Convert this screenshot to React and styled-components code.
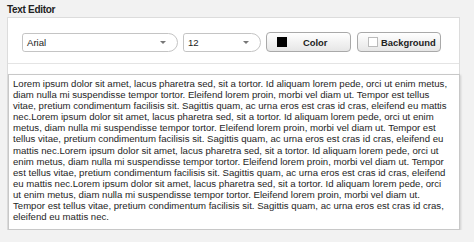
import { useState } from "react";
import styled, { createGlobalStyle } from "styled-components";

const GlobalStyle = createGlobalStyle`
  body {
    margin: 0;
    background: #f2f2f2;
    font-family: "Liberation Sans", Arial, sans-serif;
  }
`;

// wrapped the way the original editor wraps it
const LINES = [
  "Lorem ipsum dolor sit amet, lacus pharetra sed, sit a tortor. Id aliquam lorem pede, orci ut enim metus,",
  "diam nulla mi suspendisse tempor tortor. Eleifend lorem proin, morbi vel diam ut. Tempor est tellus",
  "vitae, pretium condimentum facilisis sit. Sagittis quam, ac urna eros est cras id cras, eleifend eu mattis",
  "nec.Lorem ipsum dolor sit amet, lacus pharetra sed, sit a tortor. Id aliquam lorem pede, orci ut enim",
  "metus, diam nulla mi suspendisse tempor tortor. Eleifend lorem proin, morbi vel diam ut. Tempor est",
  "tellus vitae, pretium condimentum facilisis sit. Sagittis quam, ac urna eros est cras id cras, eleifend eu",
  "mattis nec.Lorem ipsum dolor sit amet, lacus pharetra sed, sit a tortor. Id aliquam lorem pede, orci ut",
  "enim metus, diam nulla mi suspendisse tempor tortor. Eleifend lorem proin, morbi vel diam ut. Tempor",
  "est tellus vitae, pretium condimentum facilisis sit. Sagittis quam, ac urna eros est cras id cras, eleifend",
  "eu mattis nec.Lorem ipsum dolor sit amet, lacus pharetra sed, sit a tortor. Id aliquam lorem pede, orci",
  "ut enim metus, diam nulla mi suspendisse tempor tortor. Eleifend lorem proin, morbi vel diam ut.",
  "Tempor est tellus vitae, pretium condimentum facilisis sit. Sagittis quam, ac urna eros est cras id cras,",
  "eleifend eu mattis nec.",
];

const Page = styled.div`
  padding: 4px 14px 0 7px;
`;

const Title = styled.h1`
  margin: 0;
  height: 13px;
  font-size: 10px;
  line-height: 11px;
  font-weight: bold;
  letter-spacing: -0.3px;
  color: #222;
`;

const Panel = styled.section`
  background: #fff;
  border: 1px solid #dcdcdc;
  border-bottom: none;
`;

const Toolbar = styled.div`
  display: flex;
  align-items: center;
  gap: 5px;
  padding: 14px 14px 11px;
  border-bottom: 1px solid #e4e4e4;
`;

const Select = styled.div`
  box-sizing: border-box;
  width: ${(p) => p.$width}px;
  height: 19px;
  display: flex;
  align-items: center;
  justify-content: space-between;
  padding: 0 11px 0 4px;
  border: 1px solid #c4c4c4;
  border-radius: 3px 10px 10px 3px;
  font-size: 9.6px;
  color: #222;
  background: #fff;
`;

const Arrow = styled.span`
  width: 0;
  height: 0;
  border-left: 3px solid transparent;
  border-right: 3px solid transparent;
  border-top: 3px solid #777;
`;

const Button = styled.button`
  box-sizing: border-box;
  width: ${(p) => p.$width}px;
  height: 20px;
  margin-left: ${(p) => p.$gap || 0}px;
  display: flex;
  align-items: center;
  gap: ${(p) => p.$inner}px;
  padding: 0 0 0 10px;
  border: 1px solid #a9a9a9;
  border-radius: 4px;
  background: linear-gradient(#ffffff, #e6e6e6);
  font-family: "Liberation Sans", Arial, sans-serif;
  font-size: 9.4px;
  font-weight: bold;
  color: #222;
  cursor: pointer;
`;

const Swatch = styled.span`
  box-sizing: border-box;
  width: 10px;
  height: 10px;
  flex: none;
  background: ${(p) => p.$color};
  border: 1px solid ${(p) => (p.$color === "#000" ? "#000" : "#bbb")};
`;

const Editor = styled.textarea`
  display: block;
  box-sizing: border-box;
  width: calc(100% + 1px);
  height: 156px;
  margin: 10px 0 0 0;
  padding: 3px 8px 0 4px;
  border: 1px solid #c8c8c8;
  box-shadow: 1px 1px 2px rgba(0, 0, 0, 0.15);
  font-family: "Liberation Sans", Arial, sans-serif;
  font-size: 9.6px;
  line-height: 11.1px;
  color: #1e1e1e;
  white-space: pre;
  resize: none;
  overflow: hidden;
  outline: none;
`;

export default function App() {
  const [text, setText] = useState(LINES.join("\n"));

  return (
    <Page>
      <GlobalStyle />
      <Title>Text Editor</Title>
      <Panel>
        <Toolbar>
          <Select $width={156}>
            Arial <Arrow />
          </Select>
          <Select $width={78}>
            12 <Arrow />
          </Select>
          <Button $width={85} $inner={16}>
            <Swatch $color="#000" />
            Color
          </Button>
          <Button $width={84} $gap={1} $inner={3}>
            <Swatch $color="#fff" />
            Background
          </Button>
        </Toolbar>
        <Editor value={text} onChange={(e) => setText(e.target.value)} />
      </Panel>
    </Page>
  );
}
